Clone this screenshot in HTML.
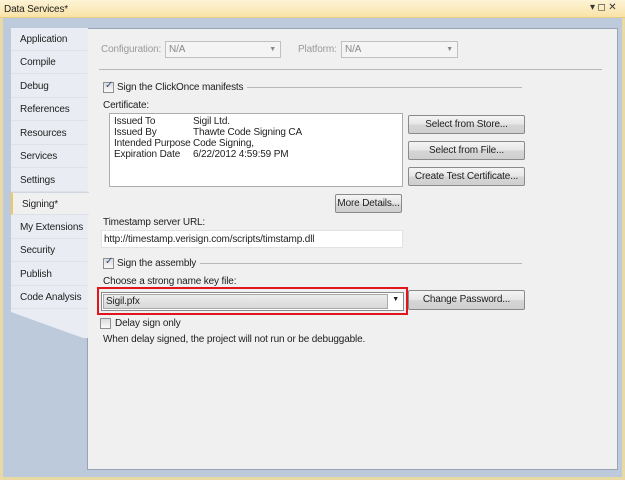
<!DOCTYPE html><html><head><style>
*{margin:0;padding:0;box-sizing:border-box}
body{width:625px;height:480px;overflow:hidden;font-family:"Liberation Sans",sans-serif;font-size:10px;letter-spacing:-0.15px;color:#1e1e1e;background:#e9d9a4;position:relative}
div{white-space:nowrap}
.a{position:absolute}
.btn{position:absolute;border:1px solid #8a8a8a;border-radius:2px;background:linear-gradient(#f4f4f4,#e6e6e6 50%,#d6d6d6 51%,#cfcfcf);text-align:center;line-height:17px}
.cb{position:absolute;width:11px;height:11px;border:1px solid #8e8f8f;background:linear-gradient(#dcdcdc,#fafafa)}
.line{position:absolute;height:1px;background:#b8b8b8}
.tab{position:absolute;left:11px;width:76px;height:23px;padding-left:9px;line-height:24px;border-bottom:1px solid #dde2ea}
.lbl{background:#f0f0f0;padding-right:4px}
</style></head><body>
<div class="a" style="left:0;top:0;width:625px;height:18px;background:linear-gradient(#fdf4d6,#f9e3a6);border-bottom:1px solid #e5cd88"></div>
<div class="a" style="left:4px;top:4px">Data Services*</div>
<div class="a" style="left:590px;top:2px;color:#333">▾ ◻ ✕</div>
<div class="a" style="left:3px;top:18px;width:619px;height:459px;background:#bccadc"></div>
<div class="a" style="left:87px;top:28px;width:531px;height:442px;background:#f0f0f0;border:1px solid #98a4b4"></div>
<svg class="a" style="left:11px;top:28px" width="77" height="450"><polygon points="0,0 77,0 77,310 72,310 0,284" fill="#e9edf3"/></svg>
<div class="tab" style="top:28px">Application</div>
<div class="tab" style="top:51px">Compile</div>
<div class="tab" style="top:75px">Debug</div>
<div class="tab" style="top:98px">References</div>
<div class="tab" style="top:122px">Resources</div>
<div class="tab" style="top:145px">Services</div>
<div class="tab" style="top:169px">Settings</div>
<div class="tab" style="top:192px;background:#f0f0f0;width:78px;border-left:2px solid #f0c860;border-top:1px solid #cfd6e0">Signing*</div>
<div class="tab" style="top:216px">My Extensions</div>
<div class="tab" style="top:239px">Security</div>
<div class="tab" style="top:263px">Publish</div>
<div class="tab" style="top:286px">Code Analysis</div>

<div class="a" style="left:101px;top:44px;color:#9a9a9a">Configuration:</div>
<div class="a" style="left:165px;top:41px;width:116px;height:17px;border:1px solid #c0c0c0;background:#f4f4f4;color:#888;padding-left:3px;line-height:15px">N/A<span style="position:absolute;right:4px;font-size:7px">▼</span></div>
<div class="a" style="left:298px;top:44px;color:#9a9a9a">Platform:</div>
<div class="a" style="left:341px;top:41px;width:117px;height:17px;border:1px solid #c0c0c0;background:#f4f4f4;color:#888;padding-left:3px;line-height:15px">N/A<span style="position:absolute;right:4px;font-size:7px">▼</span></div>
<div class="line" style="left:99px;top:69px;width:503px"></div>

<div class="line" style="left:240px;top:87px;width:282px"></div>
<div class="cb" style="left:103px;top:82px"></div><div class="a" style="left:105px;top:80px;color:#2a4d8a">✓</div>
<div class="a lbl" style="left:117px;top:82px">Sign the ClickOnce manifests</div>
<div class="a" style="left:103px;top:100px">Certificate:</div>
<div class="a" style="left:109px;top:113px;width:294px;height:74px;background:#fff;border:1px solid #abadb3"></div>
<div class="a" style="left:114px;top:116px;line-height:11px">Issued To<br>Issued By<br>Intended Purpose<br>Expiration Date</div>
<div class="a" style="left:193px;top:116px;line-height:11px">Sigil Ltd.<br>Thawte Code Signing CA<br>Code Signing,<br>6/22/2012 4:59:59 PM</div>
<div class="btn" style="left:408px;top:115px;width:117px;height:19px">Select from Store...</div>
<div class="btn" style="left:408px;top:141px;width:117px;height:19px">Select from File...</div>
<div class="btn" style="left:408px;top:167px;width:117px;height:19px">Create Test Certificate...</div>
<div class="btn" style="left:335px;top:194px;width:67px;height:19px">More Details...</div>

<div class="a" style="left:103px;top:217px">Timestamp server URL:</div>
<div class="a" style="left:101px;top:230px;width:302px;height:18px;background:#fff;border:1px solid #e2e2e2;padding-left:2px;line-height:17px">http://timestamp.verisign.com/scripts/timstamp.dll</div>
<div class="line" style="left:197px;top:263px;width:325px"></div>
<div class="cb" style="left:103px;top:258px"></div><div class="a" style="left:105px;top:256px;color:#2a4d8a">✓</div>
<div class="a lbl" style="left:117px;top:258px">Sign the assembly</div>
<div class="a" style="left:103px;top:276px">Choose a strong name key file:</div>
<div class="a" style="left:97px;top:287px;width:311px;height:28px;border:2px solid #e0151e"></div>
<div class="a" style="left:101px;top:292px;width:303px;height:19px;border:1px solid #8a8a8a;background:#fff;padding:1px"><div style="width:285px;height:15px;background:linear-gradient(#ececec,#d8d8d8);border:1px solid #aaa;padding-left:2px;line-height:14px">Sigil.pfx</div><span style="position:absolute;right:4px;top:3px;font-size:7px">▼</span></div>
<div class="btn" style="left:408px;top:290px;width:117px;height:20px;line-height:18px">Change Password...</div>
<div class="cb" style="left:100px;top:318px"></div>
<div class="a" style="left:115px;top:318px">Delay sign only</div>
<div class="a" style="left:103px;top:334px">When delay signed, the project will not run or be debuggable.</div>
</body></html>
